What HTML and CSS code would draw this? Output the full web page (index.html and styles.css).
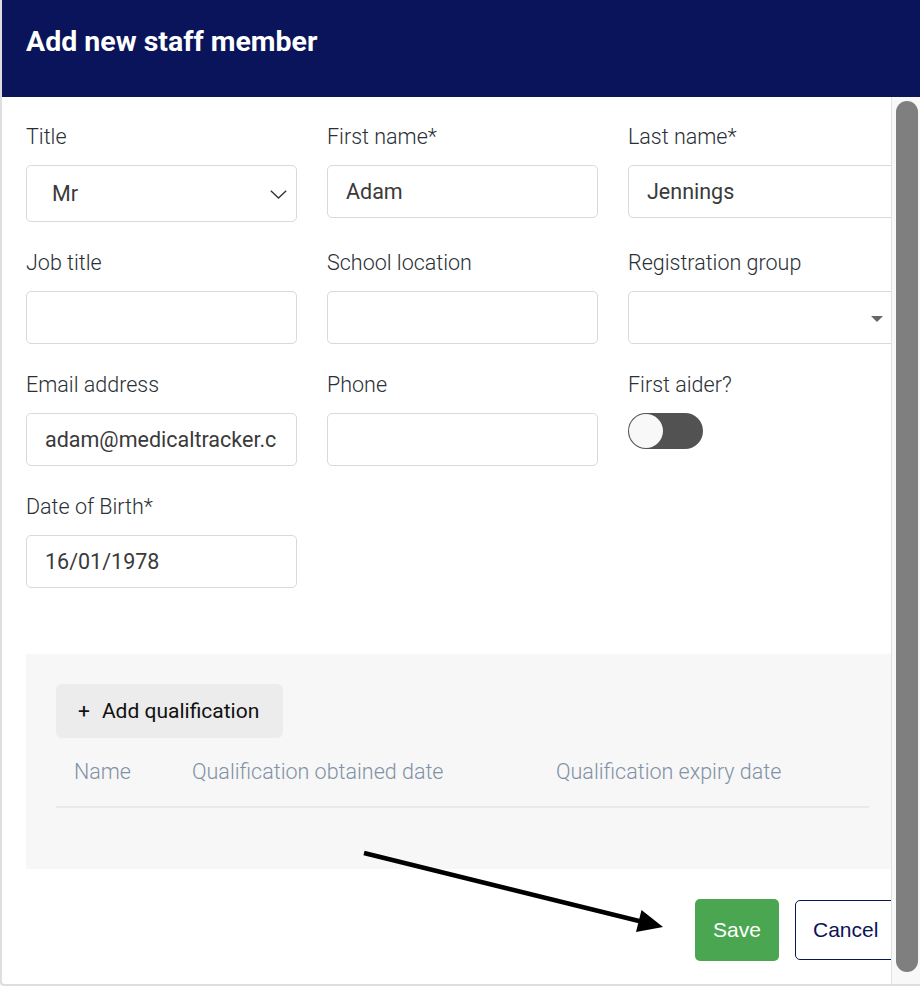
FILE: index.html
```html
<!DOCTYPE html>
<html lang="en">
<head>
<meta charset="utf-8">
<title>Add new staff member</title>
<link rel="stylesheet" href="styles.css">
</head>
<body>
<div class="modal">
  <header class="modal-header">
    <h1 class="modal-title">Add new staff member</h1>
  </header>
  <div class="modal-main">
    <div class="modal-viewport">
      <div class="content">
        <div class="form-grid">
          <div class="field">
            <label class="field-label">Title</label>
            <div class="select select-title">
              <span class="select-value">Mr</span>
              <svg class="chevron" width="17" height="9" viewBox="0 0 17 9"><path d="M0.8 0.8 L8.5 8 L16.2 0.8" fill="none" stroke="#333" stroke-width="1.4"/></svg>
            </div>
          </div>
          <div class="field">
            <label class="field-label">First name*</label>
            <input class="input" type="text" value="Adam">
          </div>
          <div class="field">
            <label class="field-label">Last name*</label>
            <input class="input" type="text" value="Jennings">
          </div>

          <div class="field">
            <label class="field-label">Job title</label>
            <input class="input" type="text" value="">
          </div>
          <div class="field">
            <label class="field-label">School location</label>
            <input class="input" type="text" value="">
          </div>
          <div class="field">
            <label class="field-label">Registration group</label>
            <div class="select select-group">
              <span class="select-value"></span>
              <svg class="caret" width="12" height="6" viewBox="0 0 12 6"><path d="M0 0 H12 L6 6 Z" fill="#666"/></svg>
            </div>
          </div>

          <div class="field">
            <label class="field-label">Email address</label>
            <input class="input input-email" type="text" value="adam@medicaltracker.com">
          </div>
          <div class="field">
            <label class="field-label">Phone</label>
            <input class="input" type="text" value="">
          </div>
          <div class="field">
            <label class="field-label">First aider?</label>
            <div class="toggle"><span class="toggle-knob"></span></div>
          </div>

          <div class="field">
            <label class="field-label">Date of Birth*</label>
            <input class="input" type="text" value="16/01/1978">
          </div>
        </div>

        <section class="quals">
          <button class="btn-add" type="button"><span class="plus">+</span>Add qualification</button>
          <table class="qual-table">
            <colgroup><col class="col-name"><col class="col-obtained"><col></colgroup>
            <thead>
              <tr><th>Name</th><th>Qualification obtained date</th><th>Qualification expiry date</th></tr>
            </thead>
          </table>
        </section>

        <div class="actions">
          <button class="btn btn-save" type="button">Save</button>
          <button class="btn btn-cancel" type="button">Cancel</button>
        </div>
      </div>
    </div>
    <div class="scrollbar"><div class="scrollbar-thumb"></div></div>
  </div>
  <svg class="annotation" width="920" height="988" viewBox="0 0 920 988">
    <line x1="364" y1="853" x2="641" y2="921.5" stroke="#000" stroke-width="4.5"/>
    <polygon points="641.5,910 663,927 636,932" fill="#000"/>
  </svg>
</div>
</body>
</html>
```

FILE: styles.css
```css
* {
  box-sizing: border-box;
}

html, body {
  margin: 0;
  padding: 0;
  background: #ffffff;
}

body {
  font-family: Roboto, "Liberation Sans", Arial, sans-serif;
  width: 920px;
  height: 988px;
  overflow: hidden;
}

.modal {
  position: relative;
  width: 920px;
  height: 986px;
  border-left: 2px solid #dedede;
  border-bottom: 2px solid #dedede;
  border-bottom-left-radius: 4px;
  display: flex;
  flex-direction: column;
}

.modal-header {
  height: 97px;
  flex-shrink: 0;
  background: #0a145a;
  padding: 25px 24px 0;
}

.modal-title {
  margin: 0;
  color: #ffffff;
  font-family: Roboto, "Liberation Sans", sans-serif;
  font-weight: 700;
  font-size: 28.5px;
  line-height: 34px;
}

.modal-main {
  flex: 1;
  min-height: 0;
  display: flex;
}

.modal-viewport {
  flex: 1;
  min-width: 0;
  overflow: hidden;
}

.content {
  width: 873px;
  margin-left: 24px;
  padding-top: 28px;
}

.form-grid {
  display: grid;
  grid-template-columns: repeat(3, 271px);
  column-gap: 30px;
  row-gap: 29px;
  align-items: start;
}

.field {
  display: flex;
  flex-direction: column;
}

.field-label {
  font-size: 21.5px;
  line-height: 24px;
  font-weight: 300;
  color: #292f35;
  margin-bottom: 16px;
}

.input {
  height: 53px;
  width: 100%;
  border: 1px solid #d9d9d9;
  border-radius: 5px;
  background: #ffffff;
  padding: 0 18px;
  font-family: Roboto, "Liberation Sans", sans-serif;
  font-size: 21.5px;
  font-weight: 400;
  color: #3a3a3a;
  outline: none;
}

.input-email {
  padding-right: 19px;
}

.select {
  display: flex;
  align-items: center;
  justify-content: space-between;
  width: 100%;
  border: 1px solid #d9d9d9;
  border-radius: 5px;
  background: #ffffff;
  font-size: 21.5px;
  color: #3a3a3a;
}

.select-title {
  height: 57px;
  padding: 0 9px 0 25px;
}

.select-group {
  height: 53px;
  padding: 0 15px 0 18px;
}

.chevron {
  display: block;
  margin-top: 1px;
}

.caret {
  display: block;
  margin-top: 2px;
}

.toggle {
  width: 75px;
  height: 36px;
  border-radius: 18px;
  background: #525252;
  padding: 1px;
  display: flex;
  align-items: center;
}

.toggle-knob {
  width: 34px;
  height: 34px;
  border-radius: 50%;
  background: #f8f8f8;
}

.quals {
  margin-top: 66px;
  background: #f7f7f7;
  padding: 30px 30px 61px;
}

.btn-add {
  display: flex;
  align-items: center;
  width: 227px;
  height: 54px;
  padding: 0 0 0 22px;
  border: none;
  border-radius: 6px;
  background: #ececec;
  font-family: Roboto, "Liberation Sans", sans-serif;
  font-size: 21px;
  font-weight: 400;
  color: #111111;
}

.plus {
  margin-right: 12px;
}

.qual-table {
  width: 100%;
  border-collapse: collapse;
  table-layout: fixed;
}

.col-name {
  width: 118px;
}

.col-obtained {
  width: 364px;
}

.qual-table th {
  text-align: left;
  font-size: 21.5px;
  line-height: 24px;
  font-weight: 300;
  color: #8191a6;
  padding: 22px 18px;
  border-bottom: 2px solid #e6e9ed;
  white-space: nowrap;
}

.actions {
  margin-top: 30px;
  display: flex;
  justify-content: flex-end;
  align-items: center;
  gap: 16px;
  padding-bottom: 24px;
}

.btn {
  font-family: "Liberation Sans", Arial, sans-serif;
  font-size: 21px;
  border-radius: 5px;
}

.btn-save {
  height: 62px;
  width: 84px;
  border: none;
  background: #4ba651;
  color: #ffffff;
}

.btn-cancel {
  height: 60px;
  width: 104px;
  border: 1.5px solid #0a145a;
  background: #ffffff;
  color: #0a145a;
  text-align: left;
  padding: 0 0 0 17px;
}

.scrollbar {
  width: 29px;
  flex-shrink: 0;
  border-left: 1px solid #e2e2e2;
  background: #f8f8f8;
  padding: 4px 1px 12px 4px;
}

.scrollbar-thumb {
  width: 22px;
  height: 100%;
  border-radius: 11px;
  background: #7f7f7f;
}

.annotation {
  position: absolute;
  left: -2px;
  top: 0;
  pointer-events: none;
}
```
